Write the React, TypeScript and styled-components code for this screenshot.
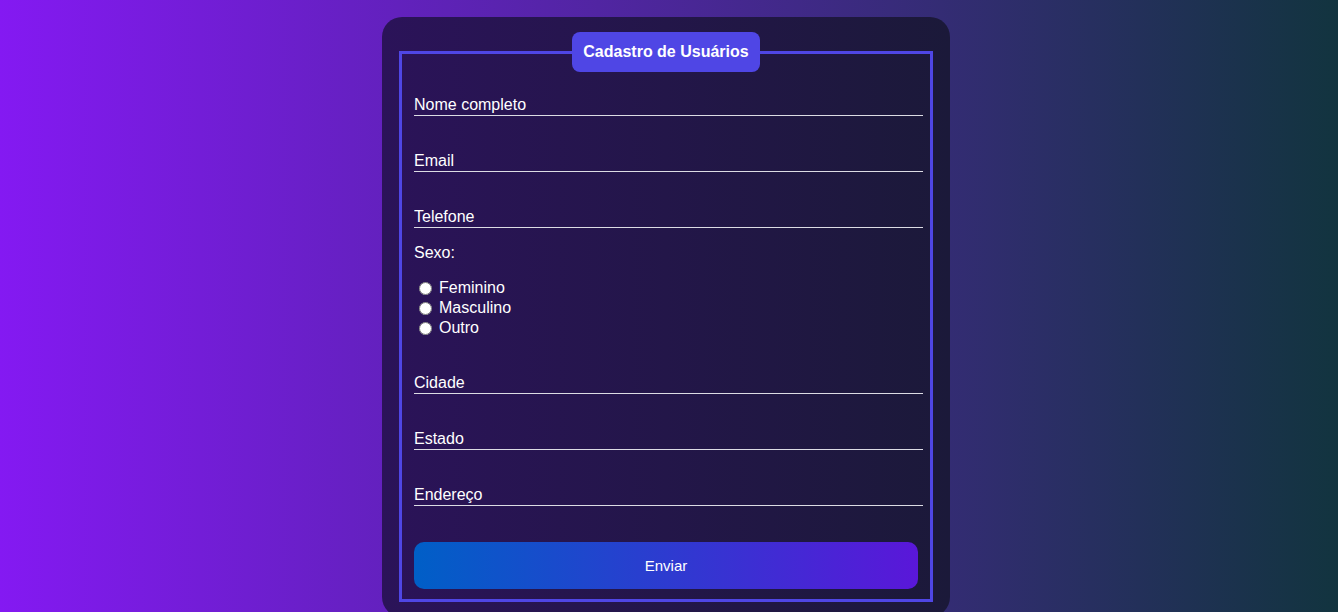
import React from "react";
import styled, { createGlobalStyle } from "styled-components";

const GlobalStyle = createGlobalStyle`
  html, body {
    margin: 0;
    padding: 0;
    height: 100%;
    overflow: hidden;
  }
  body {
    background: linear-gradient(to right, #8419f2 0%, #12343f 100%);
    font-family: "Liberation Sans", Arial, sans-serif;
    color: #ffffff;
  }
  #root {
    min-height: 100%;
  }
`;

const Page = styled.div`
  display: flex;
  justify-content: center;
  padding: 17px 6px 0 0;
`;

const Card = styled.form`
  width: 568px;
  box-sizing: border-box;
  padding: 15px;
  border-radius: 20px;
  background: linear-gradient(to right, #2b1359 0%, #1b1939 100%);
`;

const Fieldset = styled.fieldset`
  margin: 0 2px;
  border: 3px solid #4f46e5;
  padding: 0 12px 10px;
  min-width: 0;
`;

const Legend = styled.legend`
  margin: 0 auto;
  padding: 10px 11px;
  line-height: 20px;
  background: #4f46e5;
  color: #ffffff;
  font-weight: bold;
  font-size: 16px;
  border-radius: 8px;
`;

const Content = styled.div`
  display: flex;
  flex-direction: column;
`;

const TextInput = styled.input<{ $gap: number }>`
  display: block;
  width: 509px;
  height: 20px;
  box-sizing: border-box;
  margin: ${(p) => p.$gap}px 0 0;
  padding: 0 0 2px;
  border: none;
  border-bottom: 1px solid #dcdce4;
  background: transparent;
  color: #ffffff;
  font-family: "Liberation Sans", Arial, sans-serif;
  font-size: 16px;
  outline: none;

  &::placeholder {
    color: #ffffff;
    opacity: 1;
  }
`;

const GroupLabel = styled.div`
  margin-top: 16px;
  font-size: 16px;
  line-height: 18px;
`;

const RadioGroup = styled.div`
  margin-top: 16px;
  display: flex;
  flex-direction: column;
`;

const RadioRow = styled.label`
  display: flex;
  align-items: center;
  height: 20px;
  font-size: 16px;
  line-height: 18px;
  cursor: pointer;
`;

const Radio = styled.input`
  width: 13px;
  height: 13px;
  margin: 0 7px 0 5px;
`;

const Submit = styled.button`
  margin-top: 36px;
  width: 100%;
  height: 47px;
  border: none;
  border-radius: 10px;
  background: linear-gradient(to right, #005fc7 0%, #5a17d9 100%);
  color: #ffffff;
  font-family: "Liberation Sans", Arial, sans-serif;
  font-size: 15px;
  cursor: pointer;
`;

const topFields = [
  { name: "nome", label: "Nome completo", gap: 24 },
  { name: "email", label: "Email", gap: 36 },
  { name: "telefone", label: "Telefone", gap: 36 },
];

const bottomFields = [
  { name: "cidade", label: "Cidade", gap: 36 },
  { name: "estado", label: "Estado", gap: 36 },
  { name: "endereco", label: "Endereço", gap: 36 },
];

const options = ["Feminino", "Masculino", "Outro"];

export default function App() {
  return (
    <>
      <GlobalStyle />
      <Page>
        <Card onSubmit={(e) => e.preventDefault()}>
          <Fieldset>
            <Legend>Cadastro de Usuários</Legend>
            <Content>
              {topFields.map((f) => (
                <TextInput key={f.name} name={f.name} placeholder={f.label} $gap={f.gap} />
              ))}
              <GroupLabel>Sexo:</GroupLabel>
              <RadioGroup>
                {options.map((o) => (
                  <RadioRow key={o}>
                    <Radio type="radio" name="sexo" value={o} />
                    {o}
                  </RadioRow>
                ))}
              </RadioGroup>
              {bottomFields.map((f) => (
                <TextInput key={f.name} name={f.name} placeholder={f.label} $gap={f.gap} />
              ))}
              <Submit type="submit">Enviar</Submit>
            </Content>
          </Fieldset>
        </Card>
      </Page>
    </>
  );
}
